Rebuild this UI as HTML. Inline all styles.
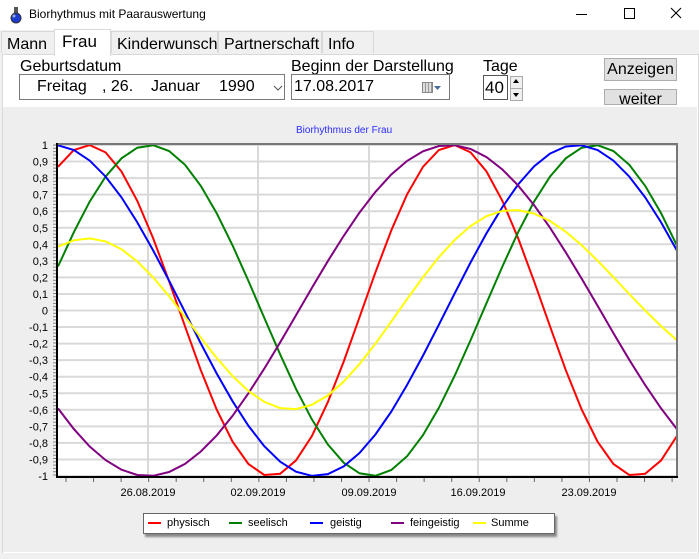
<!DOCTYPE html>
<html><head><meta charset="utf-8"><style>
body{margin:0;width:699px;height:559px;background:#f0f0f0;font-family:"Liberation Sans",Arial,sans-serif;position:relative;overflow:hidden}
.a{position:absolute}
.t{font-size:16px;color:#000;white-space:nowrap}
.tab{position:absolute;top:31px;height:22px;border:1px solid #d9d9d9;border-bottom:none;line-height:25px;font-size:16px;white-space:nowrap;padding-left:5px;box-sizing:border-box}
</style></head><body>
<div class="a" style="left:0;top:0;width:699px;height:30px;background:#fff"></div>
<div class="a" style="left:9px;top:6px"><svg width="14" height="18" viewBox="0 0 14 18"><rect x="5" y="1" width="4" height="6" fill="#555"/><circle cx="7" cy="12" r="5" fill="#1a3ad0" stroke="#333"/><circle cx="5" cy="10" r="1.5" fill="#9ad"/></svg></div>
<div class="a" style="left:29px;top:7px;font-size:12px">Biorhythmus mit Paarauswertung</div>
<div class="a" style="left:576px;top:14px;width:11px;height:1px;background:#000"></div>
<div class="a" style="left:624px;top:8px;width:9px;height:9px;border:1px solid #000"></div>
<svg class="a" style="left:670px;top:7px" width="12" height="12"><path d="M1 1L11 11M11 1L1 11" stroke="#000" stroke-width="1.1"/></svg>
<div class="a" style="left:2px;top:54px;width:695px;height:500px;background:#fff;border:1px solid #d9d9d9"></div>
<div class="tab" style="left:1px;width:54px">Mann</div>
<div class="tab" style="left:111px;width:107px">Kinderwunsch</div>
<div class="tab" style="left:218px;width:104px">Partnerschaft</div>
<div class="tab" style="left:322px;width:52px">Info</div>
<div class="tab" style="left:54px;top:29px;width:57px;height:27px;background:#fff;line-height:24px;font-size:17px;padding-left:7px">Frau</div>
<div class="a t" style="left:20px;top:58px">Geburtsdatum</div>
<div class="a" style="left:19px;top:74px;width:264px;height:24px;border:1px solid #7a7a7a;background:#fff"></div>
<div class="a t" style="left:37px;top:78px">Freitag</div>
<div class="a t" style="left:102px;top:78px">, 26.</div>
<div class="a t" style="left:151px;top:78px">Januar</div>
<div class="a t" style="left:219px;top:78px">1990</div>
<svg class="a" style="left:273px;top:85px" width="10" height="6"><path d="M1 1L5 5L9 1" stroke="#555" fill="none"/></svg>
<div class="a t" style="left:291px;top:58px">Beginn der Darstellung</div>
<div class="a" style="left:291px;top:74px;width:157px;height:24px;border:1px solid #7a7a7a;background:#fff"></div>
<div class="a t" style="left:294px;top:78px">17.08.2017</div>
<div class="a" style="left:422px;top:82px;width:9px;height:9px;border:1px solid #888;background:repeating-linear-gradient(90deg,#ddd 0 2px,#999 2px 3px)"></div>
<svg class="a" style="left:434px;top:86px" width="8" height="5"><path d="M0 0H7L3.5 4Z" fill="#4a6a9a"/></svg>
<div class="a t" style="left:483px;top:58px">Tage</div>
<div class="a" style="left:483px;top:75px;width:23px;height:23px;border:1px solid #555;background:#fff"></div>
<div class="a t" style="left:485px;top:78px;font-size:17px">40</div>
<div class="a" style="left:510px;top:76px;width:11px;height:11px;border:1px solid #aaa;background:#f0f0f0"></div>
<div class="a" style="left:510px;top:88px;width:11px;height:11px;border:1px solid #aaa;background:#f0f0f0"></div>
<svg class="a" style="left:513px;top:79px" width="7" height="20"><path d="M0 4H6L3 0Z M0 14H6L3 18Z" fill="#000"/></svg>
<div class="a t" style="left:604px;top:58px;width:71px;height:21px;border:1px solid #adadad;background:#e1e1e1;text-align:center;line-height:22px">Anzeigen</div>
<div class="a t" style="left:604px;top:89px;width:71px;height:14px;border:1px solid #adadad;background:#e1e1e1;text-align:center;line-height:19px;overflow:hidden">weiter</div>
<div class="a" style="left:3px;top:107px;width:694px;height:445px;background:#eeeeee"></div>
<div class="a" style="left:0;top:553px;width:699px;height:6px;background:#f0f0f0"></div>
<div class="a" style="left:296px;top:125px;font-size:10px;color:#2a2aff">Biorhythmus der Frau</div>
<svg class="a" id="ch" style="left:0;top:0" width="699" height="559" font-family="Liberation Sans,Arial,sans-serif" font-size="11"></svg>
<div class="a" style="left:143px;top:513px;width:410px;height:19px;border:1px solid #666;background:#fff;box-shadow:2px 3px 2px #888"></div>
<div class="a" style="left:143px;top:513px;width:412px;height:21px;font-size:11px">
<div class="a" style="left:5px;top:9px;width:13px;height:2px;background:#f00"></div><div class="a" style="left:24px;top:4px">physisch</div>
<div class="a" style="left:86px;top:9px;width:13px;height:2px;background:#008000"></div><div class="a" style="left:105px;top:4px">seelisch</div>
<div class="a" style="left:167px;top:9px;width:13px;height:2px;background:#00f"></div><div class="a" style="left:187px;top:4px">geistig</div>
<div class="a" style="left:248px;top:9px;width:13px;height:2px;background:#800080"></div><div class="a" style="left:267px;top:4px">feingeistig</div>
<div class="a" style="left:330px;top:9px;width:13px;height:2px;background:#ff0"></div><div class="a" style="left:348px;top:4px">Summe</div>
</div>
<script>
var s='',X0=58,DX=15.87,Y=function(v){return 310.5-v*165.5};
s+='<rect x="57" y="144" width="620" height="333" fill="#fff"/>';
for(var i=0;i<=20;i++){var v=1-i*0.1,y=Y(v);
 s+='<line x1="58" x2="676" y1="'+y+'" y2="'+y+'" stroke="#d9d9d9" stroke-width="2"/>';
 var l=(Math.abs(v)<1e-9?'0':(Math.round(v*10)/10).toString().replace('.',','));
 s+='<text x="48" y="'+(y+4)+'" text-anchor="end">'+l+'</text>';}
for(var y=145;y<=476;y+=3.3)s+='<line x1="53" x2="56" y1="'+y+'" y2="'+y+'" stroke="#888"/>';
var gx=[148,258,369,478,589],gl=['26.08.2019','02.09.2019','09.09.2019','16.09.2019','23.09.2019'];
for(var i=0;i<5;i++){s+='<line x1="'+gx[i]+'" x2="'+gx[i]+'" y1="144" y2="476" stroke="#d9d9d9" stroke-width="2"/>';
 s+='<text x="'+gx[i]+'" y="496" text-anchor="middle">'+gl[i]+'</text>';}
for(var x=66;x<677;x+=27.55)s+='<line x1="'+x+'" x2="'+x+'" y1="478" y2="482" stroke="#666"/>';
var f=[function(d){return Math.cos(2*Math.PI*(d-1.9)/23)},function(d){return Math.cos(2*Math.PI*(d-5.8)/28)},function(d){return Math.cos(2*Math.PI*(d+0.3)/33)},function(d){return Math.cos(2*Math.PI*(d-24.67)/38)}];
var c=['#f00','#008000','#00f','#800080','#ff0'];
for(var k=0;k<5;k++){var p=[];for(var d=0;d<=39;d++){var v=k<4?f[k](d):(f[0](d)+f[1](d)+f[2](d)+f[3](d))/4;p.push((X0+d*DX).toFixed(1)+','+Y(v).toFixed(1));}
 s+='<polyline points="'+p.join(' ')+'" fill="none" stroke="'+c[k]+'" stroke-width="2"/>';}
s+='<line x1="57" x2="677" y1="144" y2="144" stroke="#777" stroke-width="2"/><line x1="677" x2="677" y1="143" y2="478" stroke="#777" stroke-width="2"/>';
s+='<line x1="57" x2="57" y1="143" y2="478" stroke="#000" stroke-width="2"/><line x1="56" x2="678" y1="477" y2="477" stroke="#000" stroke-width="2"/>';
document.getElementById('ch').innerHTML=s;
</script>
</body></html>
